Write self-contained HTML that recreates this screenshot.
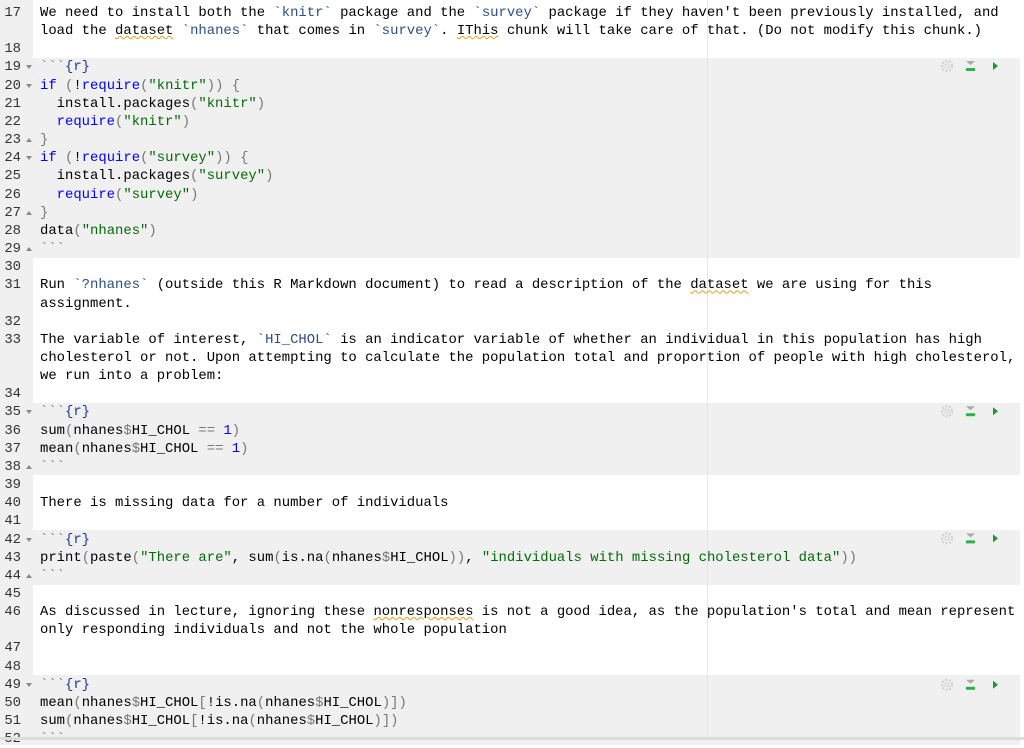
<!DOCTYPE html>
<html><head><meta charset="utf-8"><style>
body{margin:0;width:1024px;height:740px;overflow:hidden;background:#fff;position:relative;font-family:"Liberation Mono",monospace;font-size:13.9px;color:#000}
.gut{position:absolute;left:0;top:0;width:33px;height:740px;background:#f0f0f0}
.ch{position:absolute;left:0;width:1020px;background:#f0f0f0}
.ml{position:absolute;left:707px;top:0;width:1px;height:740px;background:#e6e6e6}
.rows{position:absolute;left:0;top:4px;width:1024px}
.r{height:18.17px;line-height:18.17px;white-space:pre;position:relative}
.n{position:absolute;left:0;width:21px;text-align:right;color:#333}
.fd{position:absolute;left:26px;top:7px;width:0;height:0;border-left:3px solid transparent;border-right:3px solid transparent;border-top:4px solid #888}
.fu{position:absolute;left:26px;top:7px;width:0;height:0;border-left:3px solid transparent;border-right:3px solid transparent;border-bottom:4px solid #888}
.t{position:absolute;left:40px}
.k{color:#0000ff}.s{color:#036a07}.p{color:#777}.b{color:#1c3a8a}.c{color:#2f4f7f}.u{text-decoration:underline wavy #e0a020;text-decoration-thickness:1px}
.bot{position:absolute;left:0;top:737px;width:1024px;height:3px;background:#ddd}
</style></head><body>
<div class="gut"></div>
<div class="ch" style="top:57.5px;height:200px"></div>
<div class="ch" style="top:402.7px;height:72.7px"></div>
<div class="ch" style="top:530px;height:54.5px"></div>
<div class="ch" style="top:675.3px;height:70px"></div>
<div class="ml"></div>
<svg style="position:absolute;left:0;top:0" width="1024" height="740">
<g>
<circle cx="947" cy="66" r="5" fill="none" stroke="#d0d0d0" stroke-width="2.2" stroke-dasharray="2 1.6"/><circle cx="947" cy="66" r="2" fill="none" stroke="#d0d0d0" stroke-width="1"/>
<path d="M966 61h9l-4.5 4z" fill="#aaa"/><rect x="966" y="68" width="9" height="3" fill="#2db34a"/>
<path d="M993 62v8l5-4z" fill="#1a9a30"/></g>
<g transform="translate(0,345.2)">
<circle cx="947" cy="66" r="5" fill="none" stroke="#d0d0d0" stroke-width="2.2" stroke-dasharray="2 1.6"/><circle cx="947" cy="66" r="2" fill="none" stroke="#d0d0d0" stroke-width="1"/>
<path d="M966 61h9l-4.5 4z" fill="#aaa"/><rect x="966" y="68" width="9" height="3" fill="#2db34a"/>
<path d="M993 62v8l5-4z" fill="#1a9a30"/></g>
<g transform="translate(0,472.4)">
<circle cx="947" cy="66" r="5" fill="none" stroke="#d0d0d0" stroke-width="2.2" stroke-dasharray="2 1.6"/><circle cx="947" cy="66" r="2" fill="none" stroke="#d0d0d0" stroke-width="1"/>
<path d="M966 61h9l-4.5 4z" fill="#aaa"/><rect x="966" y="68" width="9" height="3" fill="#2db34a"/>
<path d="M993 62v8l5-4z" fill="#1a9a30"/></g>
<g transform="translate(0,618.8)">
<circle cx="947" cy="66" r="5" fill="none" stroke="#d0d0d0" stroke-width="2.2" stroke-dasharray="2 1.6"/><circle cx="947" cy="66" r="2" fill="none" stroke="#d0d0d0" stroke-width="1"/>
<path d="M966 61h9l-4.5 4z" fill="#aaa"/><rect x="966" y="68" width="9" height="3" fill="#2db34a"/>
<path d="M993 62v8l5-4z" fill="#1a9a30"/></g>
</svg>
<div class="rows">
<div class="r"><span class="n">17</span><span class="t">We need to install both the <span class="c">`knitr`</span> package and the <span class="c">`survey`</span> package if they haven't been previously installed, and</span></div>
<div class="r"><span class="t">load the <span class="u">dataset</span> <span class="c">`nhanes`</span> that comes in <span class="c">`survey`</span>. <span class="u">IThis</span> chunk will take care of that. (Do not modify this chunk.)</span></div>
<div class="r"><span class="n">18</span></div>
<div class="r"><span class="n">19</span><i class="fd"></i><span class="t"><span class="p">&#96;&#96;&#96;</span><span class="b">{r}</span></span></div>
<div class="r"><span class="n">20</span><i class="fd"></i><span class="t"><span class="k">if</span> <span class="p">(</span>!<span class="k">require</span><span class="p">(</span><span class="s">"knitr"</span><span class="p">))</span> <span class="p">{</span></span></div>
<div class="r"><span class="n">21</span><span class="t">  install.packages<span class="p">(</span><span class="s">"knitr"</span><span class="p">)</span></span></div>
<div class="r"><span class="n">22</span><span class="t">  <span class="k">require</span><span class="p">(</span><span class="s">"knitr"</span><span class="p">)</span></span></div>
<div class="r"><span class="n">23</span><i class="fu"></i><span class="t"><span class="p">}</span></span></div>
<div class="r"><span class="n">24</span><i class="fd"></i><span class="t"><span class="k">if</span> <span class="p">(</span>!<span class="k">require</span><span class="p">(</span><span class="s">"survey"</span><span class="p">))</span> <span class="p">{</span></span></div>
<div class="r"><span class="n">25</span><span class="t">  install.packages<span class="p">(</span><span class="s">"survey"</span><span class="p">)</span></span></div>
<div class="r"><span class="n">26</span><span class="t">  <span class="k">require</span><span class="p">(</span><span class="s">"survey"</span><span class="p">)</span></span></div>
<div class="r"><span class="n">27</span><i class="fu"></i><span class="t"><span class="p">}</span></span></div>
<div class="r"><span class="n">28</span><span class="t">data<span class="p">(</span><span class="s">"nhanes"</span><span class="p">)</span></span></div>
<div class="r"><span class="n">29</span><i class="fu"></i><span class="t"><span class="p">&#96;&#96;&#96;</span></span></div>
<div class="r"><span class="n">30</span></div>
<div class="r"><span class="n">31</span><span class="t">Run <span class="c">`?nhanes`</span> (outside this R Markdown document) to read a description of the <span class="u">dataset</span> we are using for this</span></div>
<div class="r"><span class="t">assignment.</span></div>
<div class="r"><span class="n">32</span></div>
<div class="r"><span class="n">33</span><span class="t">The variable of interest, <span class="c">`HI_CHOL`</span> is an indicator variable of whether an individual in this population has high</span></div>
<div class="r"><span class="t">cholesterol or not. Upon attempting to calculate the population total and proportion of people with high cholesterol,</span></div>
<div class="r"><span class="t">we run into a problem:</span></div>
<div class="r"><span class="n">34</span></div>
<div class="r"><span class="n">35</span><i class="fd"></i><span class="t"><span class="p">&#96;&#96;&#96;</span><span class="b">{r}</span></span></div>
<div class="r"><span class="n">36</span><span class="t">sum<span class="p">(</span>nhanes<span class="p">$</span>HI_CHOL <span class="p">==</span> <span class="k">1</span><span class="p">)</span></span></div>
<div class="r"><span class="n">37</span><span class="t">mean<span class="p">(</span>nhanes<span class="p">$</span>HI_CHOL <span class="p">==</span> <span class="k">1</span><span class="p">)</span></span></div>
<div class="r"><span class="n">38</span><i class="fu"></i><span class="t"><span class="p">&#96;&#96;&#96;</span></span></div>
<div class="r"><span class="n">39</span></div>
<div class="r"><span class="n">40</span><span class="t">There is missing data for a number of individuals</span></div>
<div class="r"><span class="n">41</span></div>
<div class="r"><span class="n">42</span><i class="fd"></i><span class="t"><span class="p">&#96;&#96;&#96;</span><span class="b">{r}</span></span></div>
<div class="r"><span class="n">43</span><span class="t">print<span class="p">(</span>paste<span class="p">(</span><span class="s">"There are"</span>, sum<span class="p">(</span>is.na<span class="p">(</span>nhanes<span class="p">$</span>HI_CHOL<span class="p">))</span>, <span class="s">"individuals with missing cholesterol data"</span><span class="p">))</span></span></div>
<div class="r"><span class="n">44</span><i class="fu"></i><span class="t"><span class="p">&#96;&#96;&#96;</span></span></div>
<div class="r"><span class="n">45</span></div>
<div class="r"><span class="n">46</span><span class="t">As discussed in lecture, ignoring these <span class="u">nonresponses</span> is not a good idea, as the population's total and mean represent</span></div>
<div class="r"><span class="t">only responding individuals and not the whole population</span></div>
<div class="r"><span class="n">47</span></div>
<div class="r"><span class="n">48</span></div>
<div class="r"><span class="n">49</span><i class="fd"></i><span class="t"><span class="p">&#96;&#96;&#96;</span><span class="b">{r}</span></span></div>
<div class="r"><span class="n">50</span><span class="t">mean<span class="p">(</span>nhanes<span class="p">$</span>HI_CHOL<span class="p">[</span>!is.na<span class="p">(</span>nhanes<span class="p">$</span>HI_CHOL<span class="p">)])</span></span></div>
<div class="r"><span class="n">51</span><span class="t">sum<span class="p">(</span>nhanes<span class="p">$</span>HI_CHOL<span class="p">[</span>!is.na<span class="p">(</span>nhanes<span class="p">$</span>HI_CHOL<span class="p">)])</span></span></div>
<div class="r"><span class="n">52</span><span class="t"><span class="p">&#96;&#96;&#96;</span></span></div>
</div>
<div class="bot"></div>
</body></html>
